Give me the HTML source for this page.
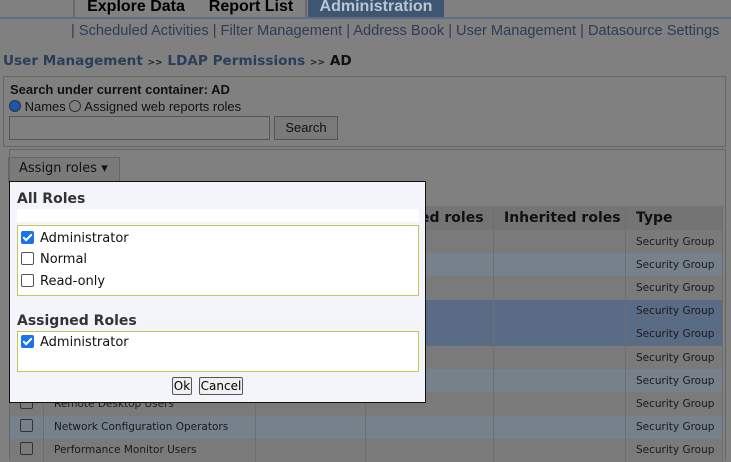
<!DOCTYPE html><html><head><style>
body{margin:0;width:731px;height:454px;overflow:hidden;background:#808080;font-family:"Liberation Sans",sans-serif;position:relative}
.a{position:absolute}
.tab{position:absolute;top:0;height:17px;font-weight:bold;font-size:16px;color:#000;text-align:center;line-height:14px}
.sub{font-size:14.6px;color:#2d3c55;white-space:nowrap}
table{border-collapse:collapse;font-family:"DejaVu Sans",sans-serif;table-layout:fixed}
tr{height:23.2px}
td{border-right:1px solid #6e6e6e;font-size:10.5px;color:#1a1a1a;padding:0;white-space:nowrap;overflow:hidden}
.cb{width:11px;height:11px;border:1px solid #333;border-radius:2px;display:inline-block}
.wcb{display:inline-block;width:11px;height:11px;border:1px solid #555;border-radius:2px;background:#fff;vertical-align:-2px;margin-right:6px}
.chk{background:#1a73e8;border-color:#1a73e8;position:relative}
.chk:after{content:"";position:absolute;left:3px;top:0px;width:3px;height:7px;border:solid #fff;border-width:0 2px 2px 0;transform:rotate(45deg)}
.m{font-family:"DejaVu Sans",sans-serif}
</style></head><body>
<div class="a" style="left:0;top:17px;width:731px;height:2px;background:#5c6f84"></div>
<div class="tab" style="left:73px;width:122px;background:#828282;border-left:2px solid #6a6a6a;border-right:2px solid #6a6a6a">Explore Data</div>
<div class="tab" style="left:197px;width:108px;background:#828282;border-right:2px solid #6a6a6a">Report List</div>
<div class="tab" style="left:308px;width:136px;background:#3e5670;color:#b9c6d6">Administration</div>
<div class="a sub" style="left:71px;top:23px">| Scheduled Activities | Filter Management | Address Book | User Management | Datasource Settings</div>
<div class="a m" style="left:3px;top:53px;font-size:13.6px;font-weight:bold;color:#2a3d5a">User Management <span style="font-size:9px;color:#222">&gt;&gt;</span> LDAP Permissions <span style="font-size:9px;color:#222">&gt;&gt;</span> <span style="color:#111">AD</span></div>
<div class="a" style="left:3px;top:76px;width:721px;height:69px;border:1px solid #666"></div>
<div class="a" style="left:10px;top:82px;font-size:13px;font-weight:bold;color:#111">Search under current container: AD</div>
<div class="a" style="left:9px;top:99px;font-size:13px;color:#111"><span style="display:inline-block;width:10px;height:10px;border-radius:50%;background:#1a55b0;border:1px solid #333;vertical-align:-1px"></span> Names <span style="display:inline-block;width:10px;height:10px;border-radius:50%;border:1px solid #333;vertical-align:-1px"></span> Assigned web reports roles</div>
<div class="a" style="left:9px;top:116px;width:259px;height:22px;border:1px solid #555"></div>
<div class="a" style="left:274px;top:116px;width:62px;height:22px;border:1px solid #555;background:#7a7a7a;font-size:13px;text-align:center;line-height:22px;color:#111">Search</div>
<div class="a m" style="left:8px;top:157px;width:110px;height:23px;border:1px solid #666;background:#7a7a7a;font-size:13px;line-height:22px;color:#111;text-indent:10px">Assign roles ▾</div>
<div class="a" style="left:9px;top:149px;width:715px;height:310px;border-left:1px solid #666;border-right:1px solid #666;border-top:1px solid #666"></div>
<table class="a" style="left:10px;top:206px;width:713px">
<tr style="background:#747474;height:24px"><td style="width:33px"></td><td style="width:211px"></td><td style="width:109px"></td><td style="width:127px"></td><td style="width:131px;font-weight:bold;font-size:14px;color:#111;text-indent:10px">Inherited roles</td><td style="font-weight:bold;font-size:14px;color:#111;text-indent:10px">Type</td></tr>
<tr style="background:#7a7a7a"><td></td><td></td><td></td><td></td><td></td><td style="text-indent:10px">Security Group</td></tr>
<tr style="background:#77818c"><td></td><td></td><td></td><td></td><td></td><td style="text-indent:10px">Security Group</td></tr>
<tr style="background:#7a7a7a"><td></td><td></td><td></td><td></td><td></td><td style="text-indent:10px">Security Group</td></tr>
<tr style="background:#5a6c85"><td></td><td></td><td></td><td></td><td></td><td style="text-indent:10px">Security Group</td></tr>
<tr style="background:#5a6c85"><td></td><td></td><td></td><td></td><td></td><td style="text-indent:10px">Security Group</td></tr>
<tr style="background:#7a7a7a"><td></td><td></td><td></td><td></td><td></td><td style="text-indent:10px">Security Group</td></tr>
<tr style="background:#77818c"><td></td><td></td><td></td><td></td><td></td><td style="text-indent:10px">Security Group</td></tr>
<tr style="background:#7a7a7a"><td style="text-align:center"><span class="cb"></span></td><td style="text-indent:10px">Remote Desktop Users</td><td></td><td></td><td></td><td style="text-indent:10px">Security Group</td></tr>
<tr style="background:#77818c"><td style="text-align:center"><span class="cb"></span></td><td style="text-indent:10px">Network Configuration Operators</td><td></td><td></td><td></td><td style="text-indent:10px">Security Group</td></tr>
<tr style="background:#7a7a7a"><td style="text-align:center"><span class="cb"></span></td><td style="text-indent:10px">Performance Monitor Users</td><td></td><td></td><td></td><td style="text-indent:10px">Security Group</td></tr>
</table>
<div class="a m" style="left:420px;top:210px;font-weight:bold;font-size:14px;color:#111">ed roles</div>
<div class="a m" style="left:9px;top:181px;width:415px;height:220px;border:1px solid #111;background:#f4f5fb">
<div class="a" style="left:7px;top:9px;font-size:14px;font-weight:bold;color:#333">All Roles</div>
<div class="a" style="left:7px;top:27px;width:402px;height:13px;background:#fff"></div>
<div class="a" style="left:7px;top:43px;width:400px;height:69px;border:1px solid #c5c55a;background:#fff;font-size:13px;color:#111">
<div style="position:absolute;left:3px;top:5px"><span class="wcb chk"></span>Administrator</div>
<div style="position:absolute;left:3px;top:26px"><span class="wcb"></span>Normal</div>
<div style="position:absolute;left:3px;top:48px"><span class="wcb"></span>Read-only</div></div>
<div class="a" style="left:7px;top:131px;font-size:14px;font-weight:bold;color:#333">Assigned Roles</div>
<div class="a" style="left:7px;top:149px;width:400px;height:39px;border:1px solid #c5c55a;background:#fff;font-size:13px;color:#111">
<div style="position:absolute;left:3px;top:3px"><span class="wcb chk"></span>Administrator</div></div>
<div class="a" style="left:162px;top:195px;width:18px;height:16px;border:1px solid #555;border-radius:2px;background:#f0f0f0;font-size:12px;text-align:center;line-height:16px">Ok</div>
<div class="a" style="left:189px;top:195px;width:42px;height:16px;border:1px solid #555;border-radius:2px;background:#f0f0f0;font-size:12px;text-align:center;line-height:16px">Cancel</div>
</div>
</body></html>
